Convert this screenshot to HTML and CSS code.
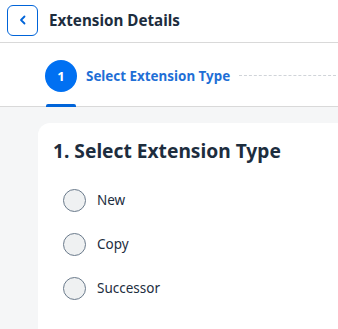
FILE: index.html
```html
<!DOCTYPE html>
<html>
<head>
<meta charset="utf-8">
<link rel="stylesheet" href="styles.css">
</head>
<body>
<div class="page">
  <header class="header">
    <button class="back" aria-label="Back">
      <svg width="12" height="12" viewBox="0 0 12 12"><path d="M7.5 2.5 L4 6 L7.5 9.5" fill="none" stroke="#0064d9" stroke-width="1.8" stroke-linecap="round" stroke-linejoin="round"/></svg>
    </button>
    <h1 class="title">Extension Details</h1>
  </header>
  <nav class="steps">
    <div class="step">
      <span class="step-num">1</span>
      <span class="step-label">Select Extension Type</span>
      <span class="step-line"></span>
    </div>
  </nav>
  <main class="content">
    <section class="card">
      <h2 class="card-title">1. Select Extension Type</h2>
      <div class="radios">
        <label class="radio"><span class="radio-circle"></span><span class="radio-text">New</span></label>
        <label class="radio"><span class="radio-circle"></span><span class="radio-text">Copy</span></label>
        <label class="radio"><span class="radio-circle"></span><span class="radio-text">Successor</span></label>
      </div>
    </section>
  </main>
</div>
</body>
</html>
```
FILE: styles.css
```css
* { box-sizing: border-box; }
html, body { margin: 0; padding: 0; }
body {
  font-family: "Noto Sans", "Liberation Sans", Arial, sans-serif;
  color: #1d2d3e;
  background: #f5f6f7;
  width: 338px;
  height: 329px;
  overflow: hidden;
}
.page { display: flex; flex-direction: column; height: 329px; }
.header {
  height: 43px;
  background: #fff;
  border-bottom: 1px solid #d9d9d9;
  display: flex;
  align-items: center;
  padding-left: 7px;
  gap: 11px;
}
.back {
  width: 31px;
  height: 31px;
  margin-top: -2px;
  border: 1.5px solid #0064d9;
  border-radius: 6px;
  background: #fff;
  display: flex;
  align-items: center;
  justify-content: center;
  padding: 0;
}
.title {
  margin: 0;
  font-size: 15.2px;
  font-weight: 700;
  color: #1d2d3e;
  margin-top: -3px;
}
.steps {
  height: 64px;
  background: #fff;
  border-bottom: 1px solid #d9d9d9;
  padding-left: 45px;
  display: flex;
}
.step {
  flex: 1;
  display: flex;
  align-items: center;
  position: relative;
  padding-top: 2px;
}
.step::after {
  content: "";
  position: absolute;
  left: 1px;
  bottom: -1px;
  width: 30px;
  height: 3px;
  background: #0064d9;
  border-radius: 2px 2px 0 0;
}
.step-num {
  width: 32px;
  height: 32px;
  border-radius: 50%;
  background: #0070f2;
  color: #fff;
  font-size: 13px;
  font-weight: 700;
  display: flex;
  align-items: center;
  justify-content: center;
  flex: none;
}
.step-label {
  margin-left: 9px;
  font-size: 13.4px;
  font-weight: 700;
  color: #1f6fd6;
  white-space: nowrap;
}
.step-line {
  flex: 1;
  margin-left: 9px;
  margin-right: 2px;
  border-top: 1px dashed #d0d4d9;
}
.content {
  flex: 1;
  padding: 16px 0 0 38px;
}
.card {
  background: #fff;
  border-radius: 12px 0 0 0;
  height: 100%;
  padding: 14px 0 0 15px;
}
.card-title {
  margin: 0;
  font-size: 19.2px;
  font-weight: 700;
  color: #1d2d3e;
  line-height: 28px;
}
.radios {
  display: flex;
  flex-direction: column;
  gap: 22px;
  margin-top: 24px;
  padding-left: 10px;
}
.radio {
  display: flex;
  align-items: center;
  gap: 11px;
  height: 22px;
}
.radio-circle {
  width: 23px;
  height: 23px;
  border-radius: 50%;
  border: 1px solid #6a7a8b;
  background: #eff1f2;
  flex: none;
}
.radio-text {
  font-size: 13.5px;
  color: #1d2d3e;
}
```
